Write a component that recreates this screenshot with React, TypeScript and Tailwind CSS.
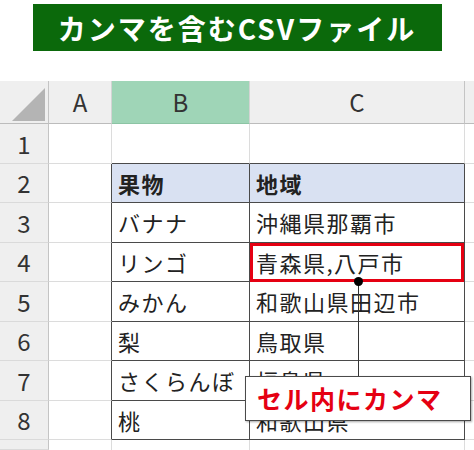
import React from 'react';

const jp = "font-['Noto_Sans_CJK_JP',sans-serif]";

const ROWS = [
  ['', ''],
  ['果物', '地域'],
  ['バナナ', '沖縄県那覇市'],
  ['リンゴ', '青森県,八戸市'],
  ['みかん', '和歌山県田辺市'],
  ['梨', '鳥取県'],
  ['さくらんぼ', '福島県'],
  ['桃', '和歌山県'],
];

function RowHeader({ n }: { n: string }) {
  return (
    <div className="flex items-center justify-center bg-[#efefef] border-r border-b border-r-[#c4c4c4] border-b-[#dadada] text-[24px] text-[#333]">
      {n}
    </div>
  );
}

export default function App() {
  return (
    <div className={`w-[474px] h-[450px] overflow-hidden bg-white ${jp}`}>
      <div className="mx-auto mt-[4px] w-[409px] h-[47px] bg-[#0b690b] flex items-center justify-center text-white text-[28px] font-bold tracking-[2px]">
        カンマを含むCSVファイル
      </div>

      <div className="relative mt-[30px] grid grid-cols-[49px_63px_138px_215px_1fr] grid-rows-[43px_40px_39px_40px_39px_40px_39px_40px_39px_1fr] h-[369px]">
        {/* column headers */}
        <div className="flex items-end justify-end bg-[#efefef] border-r border-b border-r-[#c4c4c4] border-b-[#bcbcbc] pr-[3px] pb-[2px]">
          <svg width="33" height="33" viewBox="0 0 33 33">
            <polygon points="33,0 33,33 0,33" fill="#b4b4b4" />
          </svg>
        </div>
        <div className="flex items-center justify-center bg-[#efefef] border-r border-b border-r-[#d4d4d4] border-b-[#bcbcbc] text-[24px] text-[#333]">
          A
        </div>
        <div className="flex items-center justify-center bg-[#9fd5b7] border-r border-b border-r-[#d4d4d4] border-b-[#8cc4a4] text-[24px] text-[#333]">
          B
        </div>
        <div className="flex items-center justify-center bg-[#efefef] border-r border-b border-r-[#c4c4c4] border-b-[#bcbcbc] text-[24px] text-[#333]">
          C
        </div>
        <div className="bg-[#efefef] border-b border-b-[#bcbcbc]" />

        {ROWS.map((r, i) => {
          const inTable = i >= 1;
          const header = i === 1;
          const lineB = inTable ? 'border-[#4a4a4a]' : 'border-r-[#dcdcdc] border-b-[#4a4a4a]';
          return (
            <React.Fragment key={i}>
              <RowHeader n={String(i + 1)} />
              <div className={`border-r border-b ${inTable ? 'border-r-[#4a4a4a] border-b-[#dcdcdc]' : 'border-[#dcdcdc]'}`} />
              <div
                className={`flex items-center pl-[6px] border-r border-b ${lineB} ${header ? 'bg-[#d9e1f2] font-bold' : ''} text-[22px] tracking-[1.5px] text-[#222] whitespace-nowrap`}
              >
                {r[0]}
              </div>
              <div
                className={`relative flex items-center pl-[6px] border-r border-b ${lineB} ${header ? 'bg-[#d9e1f2] font-bold' : ''} text-[22px] tracking-[1.5px] text-[#222] whitespace-nowrap`}
              >
                {r[1]}
                {i === 3 && (
                  <div className="absolute left-0 top-0 right-0 -bottom-px border-[3px] border-[#e50012]" />
                )}
              </div>
              <div className="border-b border-[#dcdcdc]" />
            </React.Fragment>
          );
        })}

        {/* row 9, only its top edge shows */}
        <RowHeader n="" />
        <div className="border-r border-[#dcdcdc]" />
        <div className="border-r border-[#dcdcdc]" />
        <div className="border-r border-[#dcdcdc]" />
        <div />

        {/* pointer from the cell to the note */}
        <div className="absolute left-[358px] top-[200px] w-px h-[95px] bg-[#333]" />
        <div className="absolute left-[354px] top-[196px] w-[9px] h-[9px] rounded-full bg-black" />
        <div className="absolute left-[245px] top-[295px] w-[226px] h-[45px] bg-white border-[1.5px] border-[#4a4a4a] shadow-[1px_1px_2px_rgba(0,0,0,0.35)] flex items-center pl-[11px] text-[25px] font-bold tracking-[1.5px] text-[#e50012]">
          セル内にカンマ
        </div>
      </div>
    </div>
  );
}
